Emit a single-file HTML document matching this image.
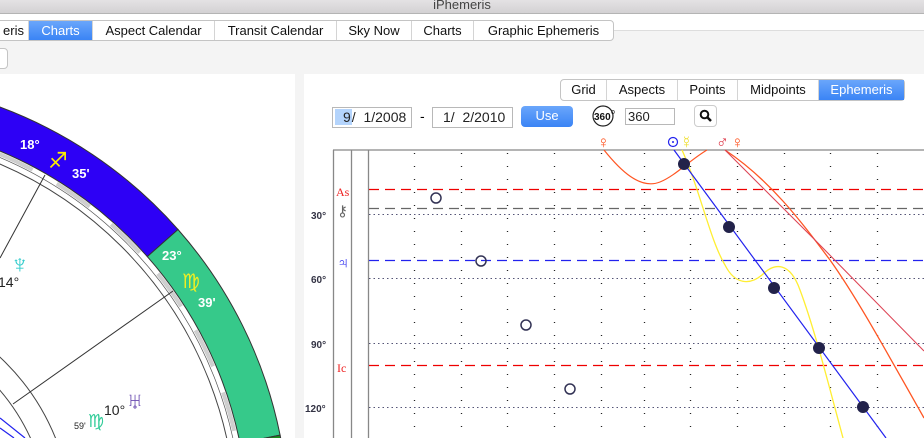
<!DOCTYPE html>
<html><head><meta charset="utf-8"><style>
*{margin:0;padding:0;box-sizing:border-box}
html,body{width:924px;height:438px;overflow:hidden}
body{background:#f4f4f4;font-family:"Liberation Sans","DejaVu Sans",sans-serif;position:relative}
.abs{position:absolute}
.title{left:0;top:0;width:924px;height:14px;background:linear-gradient(#e4e2e4,#d3d1d3);border-bottom:1px solid #b4b4b4;font-size:13px;color:#444;text-align:center;line-height:9px;overflow:hidden}
.tabs{left:-6px;top:20px;height:21px;display:flex;border:1px solid #c4c4c4;border-radius:4px;background:#fff;font-size:13px;color:#111}
.tabs div{border-right:1px solid #d4d4d4;line-height:19px;text-align:center}
.seg{left:560px;top:79px;height:22px;display:flex;border:1px solid #c4c4c4;border-radius:4px;background:#fff;font-size:13px;color:#111}
.seg div{border-right:1px solid #d4d4d4;line-height:20px;text-align:center}
.sel{background:linear-gradient(#6aa6fb,#3a84f5);color:#fff}
.field{border:1px solid #b8b8b8;background:#fff;font-size:14px;color:#222;height:21px;line-height:19px}
</style></head><body>
<div class="abs title">iPhemeris</div>
<div class="abs" style="left:0;top:14px;width:924px;height:17px;background:#fff;border-bottom:1px solid #ddd"></div>
<div class="abs tabs">
<div style="width:34px;text-align:right;padding-right:4px">eris</div>
<div class="sel" style="width:64px">Charts</div>
<div style="width:122px">Aspect Calendar</div>
<div style="width:122px">Transit Calendar</div>
<div style="width:75px">Sky Now</div>
<div style="width:62px">Charts</div>
<div style="width:139px;border-right:none">Graphic Ephemeris</div>
</div>
<div class="abs" style="left:-6px;top:48px;width:14px;height:21px;border:1px solid #c4c4c4;border-radius:4px;background:#fff"></div>
<div class="abs" style="left:0;top:74px;width:295px;height:364px;background:#fff"></div>
<div class="abs" style="left:304px;top:74px;width:620px;height:364px;background:#fff"></div>

<svg class="abs" style="left:0;top:0" width="295" height="438">
<g transform="translate(-155,523)">
<path d="M -87.9 -435.1 A 444 444 0 0 1 333 -293.5 L 302.3 -266.4 A 403 403 0 0 0 -79.8 -395 Z" fill="#2d00f5" stroke="#333" stroke-width="1"/>
<path d="M 333 -293.5 A 444 444 0 0 1 435.1 -87.9 L 395 -79.8 A 403 403 0 0 0 302.3 -266.4 Z" fill="#36c98a" stroke="#333" stroke-width="1"/>
<path d="M 435.1 -87.9 A 444 444 0 0 1 422 137 L 383 124.5 A 403 403 0 0 0 395 -79.8 Z" fill="#1b8a1b" stroke="#333" stroke-width="1"/>
<circle r="400" fill="none" stroke="#cfcfcf" stroke-width="4" stroke-dasharray="40 28"/>
<circle r="397" fill="none" stroke="#555" stroke-width="0.7"/>
<circle r="391" fill="none" stroke="#444" stroke-width="1"/>
<circle r="227" fill="none" stroke="#444" stroke-width="1"/>
<circle r="204" fill="none" stroke="#444" stroke-width="1"/>
</g>
<line x1="45" y1="175" x2="0" y2="258" stroke="#333" stroke-width="1"/>
<line x1="173" y1="291" x2="13" y2="404" stroke="#333" stroke-width="1"/>
<line x1="0" y1="418" x2="25" y2="438" stroke="#2222ee" stroke-width="1.2"/>
<line x1="0" y1="428" x2="14" y2="438" stroke="#2222ee" stroke-width="1.2"/>
<g font-weight="bold" font-size="13" fill="#fff">
<text x="20" y="149">18°</text><text x="72" y="178">35'</text>
<text x="162" y="260">23°</text><text x="198" y="307">39'</text>
</g>
<text x="48" y="168" font-size="22" fill="#ffee00" font-weight="bold">♐</text>
<text x="182" y="288" font-size="20" fill="#eeee22">♍</text>
<text x="10" y="273" font-size="26" fill="#33cccc">♆</text>
<text x="-2" y="287" font-size="14" fill="#222">14°</text>
<text x="126" y="409" font-size="24" fill="#6a4bb0">♅</text>
<text x="104" y="415" font-size="14" fill="#222">10°</text>
<text x="88" y="427" font-size="18" fill="#33cc99">♍</text>
<text x="74" y="429" font-size="9" fill="#222">59'</text>
</svg>

<div class="abs seg">
<div style="width:46px">Grid</div>
<div style="width:71px">Aspects</div>
<div style="width:60px">Points</div>
<div style="width:81px">Midpoints</div>
<div class="sel" style="width:85px;border-right:none">Ephemeris</div>
</div>
<div class="abs field" style="left:332px;top:107px;width:80px"><span style="background:#b4d4fc;padding:0 1px 0 8px;margin-left:2px">9</span>/&nbsp;&nbsp;1/2008</div>
<div class="abs" style="left:420px;top:108px;font-size:14px">-</div>
<div class="abs field" style="left:432px;top:107px;width:81px;padding-left:10px">1/&nbsp;&nbsp;2/2010</div>
<div class="abs" style="left:521px;top:106px;width:52px;height:21px;border-radius:4px;background:linear-gradient(#6aa6fb,#3a84f5);color:#fff;font-size:13px;text-align:center;line-height:20px">Use</div>
<svg class="abs" style="left:590px;top:104px" width="32" height="26">
<circle cx="13" cy="12" r="10" fill="none" stroke="#222" stroke-width="1.2"/>
<text x="4" y="16" font-size="10" font-weight="bold" fill="#111">360</text>
<text x="21" y="10" font-size="7" fill="#111">o</text>
</svg>
<div class="abs field" style="left:625px;top:108px;width:50px;height:17px;line-height:15px;font-size:13px;padding-left:2px">360</div>
<div class="abs" style="left:694px;top:105px;width:23px;height:22px;border:1px solid #ccc;border-radius:4px;background:#fff"></div>
<svg class="abs" style="left:699px;top:109px" width="14" height="14"><circle cx="5.5" cy="5.5" r="3.8" fill="none" stroke="#111" stroke-width="2"/><line x1="8.3" y1="8.3" x2="12" y2="12" stroke="#111" stroke-width="2.5"/></svg>

<svg class="abs" style="left:0;top:0" width="924" height="438">
<g stroke="#888" stroke-width="1.3">
<line x1="333" y1="150" x2="924" y2="150"/>
<line x1="333.5" y1="150" x2="333.5" y2="438"/>
<line x1="351.5" y1="150" x2="351.5" y2="438"/>
<line x1="368.5" y1="150" x2="368.5" y2="438"/>
</g>
<g stroke="#222" stroke-width="1.3" stroke-dasharray="1 12">
<line x1="414.5" y1="153" x2="414.5" y2="438"/><line x1="461.5" y1="153" x2="461.5" y2="438"/>
<line x1="507.5" y1="153" x2="507.5" y2="438"/><line x1="554.5" y1="153" x2="554.5" y2="438"/>
<line x1="601.5" y1="153" x2="601.5" y2="438"/><line x1="644.5" y1="153" x2="644.5" y2="438"/>
<line x1="690.5" y1="153" x2="690.5" y2="438"/><line x1="737.5" y1="153" x2="737.5" y2="438"/>
<line x1="784.5" y1="153" x2="784.5" y2="438"/><line x1="830.5" y1="153" x2="830.5" y2="438"/>
<line x1="877.5" y1="153" x2="877.5" y2="438"/>
</g>
<g stroke="#555577" stroke-width="1" stroke-dasharray="1.5 3">
<line x1="369" y1="214.5" x2="924" y2="214.5"/><line x1="369" y1="278.5" x2="924" y2="278.5"/>
<line x1="369" y1="343.5" x2="924" y2="343.5"/><line x1="369" y1="407.5" x2="924" y2="407.5"/>
</g>
<g stroke-width="1.2" stroke-dasharray="10 6">
<line x1="369" y1="189.5" x2="924" y2="189.5" stroke="#e00"/>
<line x1="369" y1="208.5" x2="924" y2="208.5" stroke="#666"/>
<line x1="369" y1="260.5" x2="924" y2="260.5" stroke="#2222ee"/>
<line x1="369" y1="365.5" x2="924" y2="365.5" stroke="#e00"/>
</g>
<g fill="none" stroke="#333355" stroke-width="1.5">
<circle cx="436" cy="198" r="5"/><circle cx="481" cy="261" r="5"/><circle cx="526" cy="325" r="5"/><circle cx="570" cy="389" r="5"/>
</g>
<path d="M604 150 C620 170 640 190 660 182 C675 176 690 160 707 150" fill="none" stroke="#ff5522" stroke-width="1.2"/>
<path d="M725 150 C770 180 800 220 830 260 C855 295 880 340 924 418" fill="none" stroke="#ff5522" stroke-width="1.3"/>
<path d="M725 150 L815 240 L924 351" fill="none" stroke="#dd4455" stroke-width="1.1"/>
<path d="M682 150 C700 190 710 240 725 265 C735 285 750 285 762 275 C775 262 790 262 800 290 C815 330 830 390 843 438" fill="none" stroke="#ffee33" stroke-width="1.3"/>
<line x1="674" y1="150" x2="886" y2="438" stroke="#2222ee" stroke-width="1.2"/>
<g fill="#22224a">
<circle cx="684" cy="164" r="6"/><circle cx="729" cy="227" r="6"/><circle cx="774" cy="288" r="6"/><circle cx="819" cy="348" r="6"/><circle cx="863" cy="407" r="6"/>
</g>
<text x="597" y="148" font-size="17" fill="#ff5522">♀</text>
<circle cx="673" cy="142" r="4.5" fill="none" stroke="#2222ee" stroke-width="1.2"/><circle cx="673" cy="142" r="1" fill="#2222ee"/>
<text x="680" y="148" font-size="17" fill="#eedd22">☿</text>
<text x="716" y="148" font-size="17" fill="#dd3344">♂</text>
<text x="731" y="148" font-size="17" fill="#ff5522">♀</text>
<g font-size="10" font-weight="bold" fill="#334">
<text x="311" y="219">30°</text><text x="311" y="283">60°</text><text x="311" y="348">90°</text><text x="305" y="412">120°</text>
</g>
<text x="336" y="196" font-size="12" fill="#e22" font-family="Liberation Serif,serif">As</text>
<text x="337" y="216" font-size="15" fill="#666">⚷</text>
<text x="337" y="268" font-size="16" fill="#2222ee">♃</text>
<text x="337" y="372" font-size="12" fill="#e22" font-family="Liberation Serif,serif">Ic</text>
</svg>
</body></html>
